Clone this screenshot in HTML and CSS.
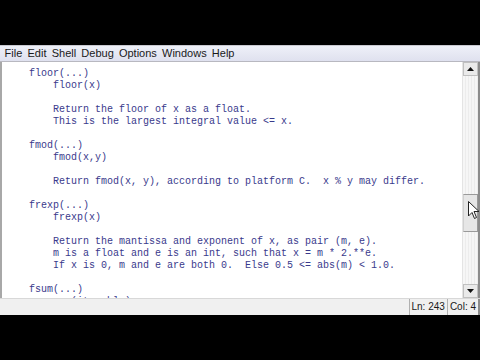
FILE: index.html
```html
<!DOCTYPE html>
<html>
<head>
<meta charset="utf-8">
<link rel="stylesheet" href="styles.css">
</head>
<body>
<div class="screen">
  <div class="letterbox top"></div>
  <div class="window">
    <div class="menubar">
      <span class="menu">File</span>
      <span class="menu">Edit</span>
      <span class="menu">Shell</span>
      <span class="menu">Debug</span>
      <span class="menu">Options</span>
      <span class="menu">Windows</span>
      <span class="menu">Help</span>
    </div>
    <div class="main">
      <div class="text">
        <div class="ln i1">floor(...)</div>
        <div class="ln i2">floor(x)</div>
        <div class="ln"></div>
        <div class="ln i2">Return the floor of x as a float.</div>
        <div class="ln i2">This is the largest integral value &lt;= x.</div>
        <div class="ln"></div>
        <div class="ln i1">fmod(...)</div>
        <div class="ln i2">fmod(x,y)</div>
        <div class="ln"></div>
        <div class="ln i2">Return fmod(x, y), according to platform C.  x % y may differ.</div>
        <div class="ln"></div>
        <div class="ln i1">frexp(...)</div>
        <div class="ln i2">frexp(x)</div>
        <div class="ln"></div>
        <div class="ln i2">Return the mantissa and exponent of x, as pair (m, e).</div>
        <div class="ln i2">m is a float and e is an int, such that x = m * 2.**e.</div>
        <div class="ln i2">If x is 0, m and e are both 0.  Else 0.5 &lt;= abs(m) &lt; 1.0.</div>
        <div class="ln"></div>
        <div class="ln i1">fsum(...)</div>
        <div class="ln i2">sum(iterable)</div>
      </div>
      <div class="scrollbar">
        <div class="sbtn"><svg width="7" height="4" viewBox="0 0 7 4"><path d="M0 4 L3.5 0 L7 4 Z" fill="#111"/></svg></div>
        <div class="track">
          <div class="gap1"></div>
          <div class="thumb"></div>
          <div class="gap2"></div>
        </div>
        <div class="sbtn"><svg width="7" height="4" viewBox="0 0 7 4"><path d="M0 0 L3.5 4 L7 0 Z" fill="#111"/></svg></div>
      </div>
      <svg class="cursor" width="12" height="19" viewBox="0 0 12 19"><path d="M0.5 0.5 L0.5 15 L4 11.5 L6.5 17.5 L8.5 16.5 L6 10.5 L11 10.5 Z" fill="#fff" stroke="#222" stroke-width="1"/></svg>
    </div>
    <div class="statusbar">
      <span class="cell">Ln: 243</span>
      <span class="cell">Col: 4</span>
    </div>
  </div>
  <div class="letterbox bottom"></div>
</div>
</body>
</html>
```
FILE: styles.css
```css
html, body {
  margin: 0;
  padding: 0;
  background: #000;
}
.screen {
  width: 480px;
  height: 360px;
  display: flex;
  flex-direction: column;
  overflow: hidden;
}
.letterbox.top { height: 45px; background: #000; }
.letterbox.bottom { flex: 1; background: #000; }
.window {
  display: flex;
  flex-direction: column;
  background: #f0f0f0;
}
.menubar {
  height: 15px;
  display: flex;
  align-items: center;
  padding-left: 2px;
  background: linear-gradient(#eef0f8, #dfe1ef);
  border-top: 1px solid #c8c8d0;
  border-bottom: 1px solid #b8b8c0;
  font-family: "Liberation Sans", Arial, sans-serif;
  font-size: 11px;
  line-height: 13px;
  color: #1a1a1a;
}
.menu { padding: 0 2.6px; }
.main {
  position: relative;
  height: 236px;
  display: flex;
  border-left: 2px solid #a8a8a8;
  background: #fff;
}
.text {
  flex: 1;
  padding: 6px 0 0 3px;
  font-family: "Liberation Mono", "Courier New", monospace;
  font-size: 10px;
  line-height: 12px;
  color: #3a3a8c;
  overflow: hidden;
}
.ln {
  height: 12px;
  white-space: pre;
}
.i1 { padding-left: 24px; }
.i2 { padding-left: 48px; }
.scrollbar {
  width: 15px;
  display: flex;
  flex-direction: column;
  background: #f4f4f4;
  border-left: 1px solid #e4e4e4;
  border-right: 2px solid #8c8c8c;
}
.sbtn {
  height: 14px;
  display: flex;
  align-items: center;
  justify-content: center;
  background: #eaeaea;
  border: 1px solid #c0c0c0;
  box-sizing: border-box;
}
.track {
  flex: 1;
  display: flex;
  flex-direction: column;
  background: repeating-linear-gradient(90deg, #f6f6f6 0 2px, #ececec 2px 3px);
}
.gap1 { height: 118px; }
.thumb {
  height: 36px;
  background: #e6e6e6;
  border: 1px solid #9a9a9a;
  border-left-color: #d0d0d0;
}
.gap2 { flex: 1; }
.cursor {
  position: absolute;
  left: 466px;
  top: 139px;
}
.statusbar {
  height: 16px;
  display: flex;
  justify-content: flex-end;
  align-items: stretch;
  background: #f0f0f0;
  border-top: 1px solid #d8d8d8;
  font-family: "Liberation Sans", Arial, sans-serif;
  font-size: 10px;
  line-height: 14px;
  color: #1a1a1a;
}
.cell {
  display: flex;
  align-items: center;
  padding: 0 2px;
  border-left: 1px solid #b0b0b0;
}
.cell:last-child { border-right: 2px solid #8c8c8c; }
```
